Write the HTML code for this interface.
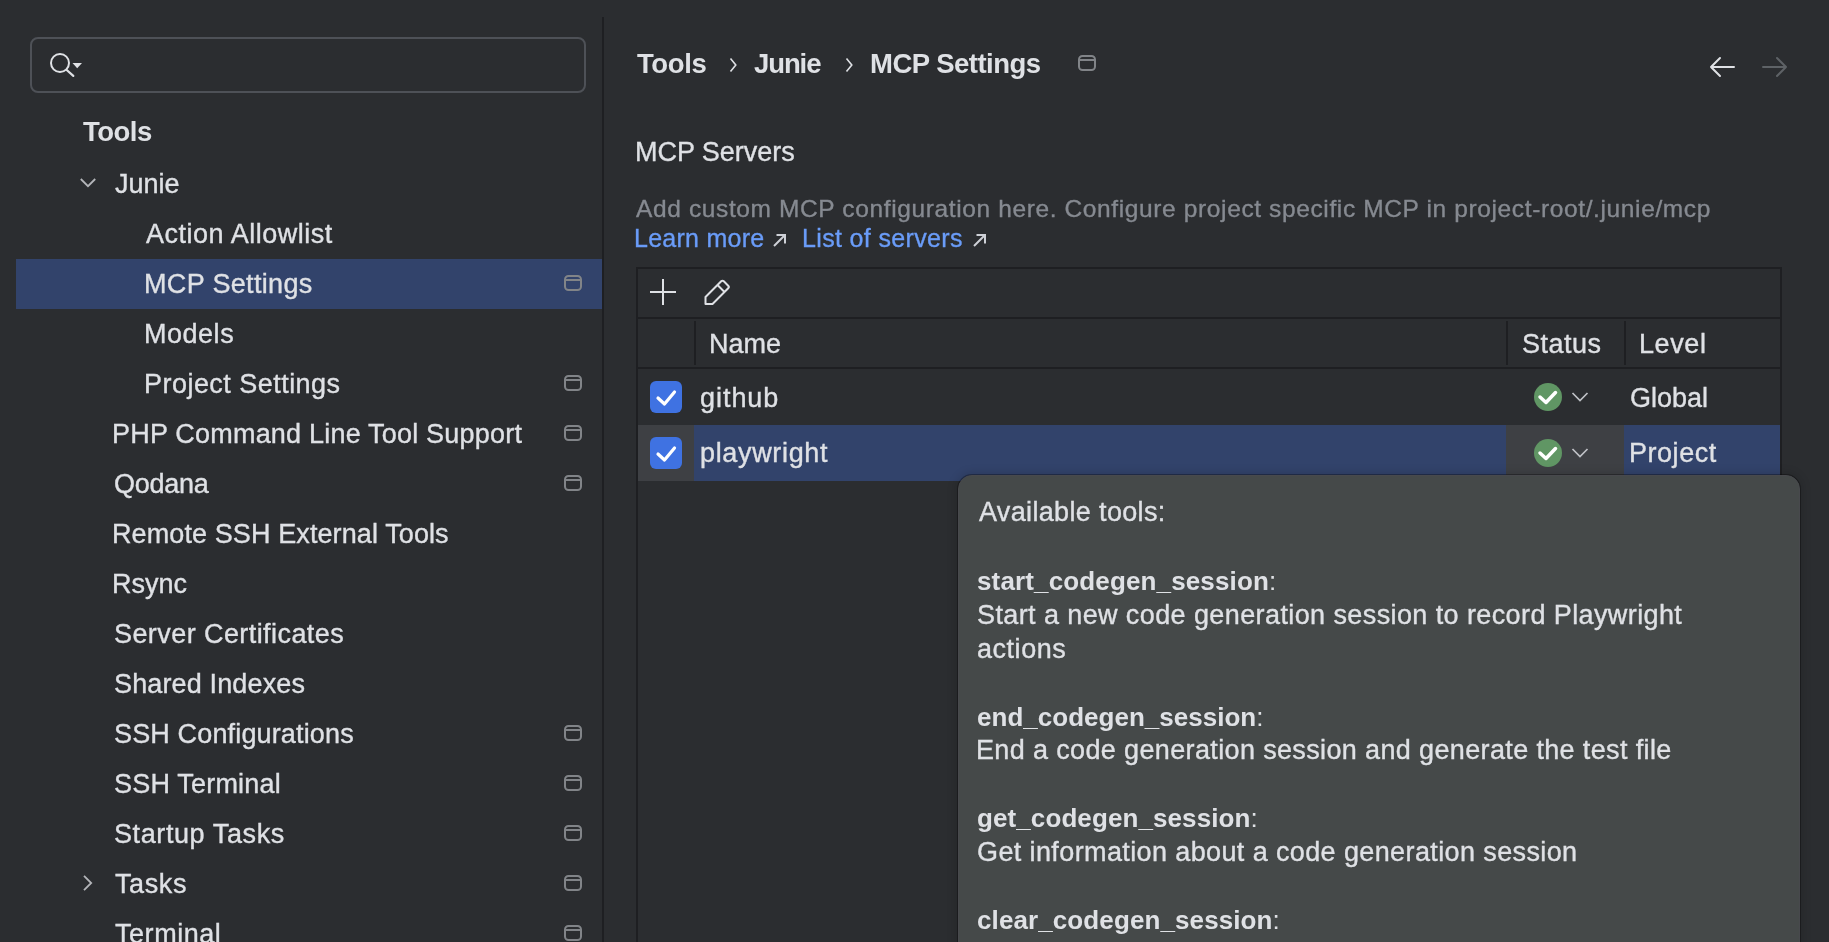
<!DOCTYPE html>
<html><head><meta charset="utf-8"><style>
html,body{margin:0;padding:0;}
body{width:1829px;height:942px;overflow:hidden;background:#2B2D30;position:relative;font-family:"Liberation Sans",sans-serif;}
.t{position:absolute;white-space:pre;-webkit-font-smoothing:antialiased;-webkit-text-stroke:0.35px currentColor;will-change:transform;}
.r{position:absolute;}
.s{position:absolute;overflow:visible;}
</style></head><body>
<div class="r" style="left:30px;top:37px;width:552px;height:52px;border:2px solid #4E5157;border-radius:8px;"></div>
<svg class="s" style="left:46px;top:48px" width="40" height="34" viewBox="0 0 40 34"><circle cx="14" cy="15" r="9" fill="none" stroke="#DFE1E5" stroke-width="2"/><line x1="20.7" y1="22" x2="27.3" y2="27.9" stroke="#DFE1E5" stroke-width="2.2" stroke-linecap="round"/><path d="M26.5 15 L36 15 L31.2 20.2 Z" fill="#DFE1E5"/></svg>
<div class="r" style="left:16px;top:259px;width:586px;height:50px;background:#32436B;"></div>
<div class="r" style="left:602px;top:17px;width:2px;height:925px;background:#1E1F22;"></div>
<div class="t" id="t1" style="left:82.80px;top:116.47px;font-size:27.5px;line-height:32px;font-weight:bold;color:#DFE1E5;letter-spacing:-0.500px;-webkit-text-stroke:0;">Tools</div>
<div class="t" id="t2" style="left:114.80px;top:169.14px;font-size:27px;line-height:31px;font-weight:normal;color:#DFE1E5;letter-spacing:0.000px;">Junie</div>
<svg class="s" style="left:78px;top:175px" width="20" height="14" viewBox="0 0 20 14"><path d="M2.8 4 L10 11.2 L17.2 4" fill="none" stroke="#B3B5B9" stroke-width="1.8"/></svg>
<div class="t" id="t3" style="left:146.00px;top:219.14px;font-size:27px;line-height:31px;font-weight:normal;color:#DFE1E5;letter-spacing:0.520px;">Action Allowlist</div>
<div class="t" id="t4" style="left:144.40px;top:269.14px;font-size:27px;line-height:31px;font-weight:normal;color:#DFE1E5;letter-spacing:0.342px;">MCP Settings</div>
<svg class="s" style="left:564px;top:275px" width="18" height="16" viewBox="0 0 18 16"><rect x="1" y="1" width="16" height="14" rx="3.5" fill="none" stroke="#818488" stroke-width="2"/><line x1="1" y1="5" x2="17" y2="5" stroke="#818488" stroke-width="2"/></svg>
<div class="t" id="t5" style="left:144.40px;top:319.14px;font-size:27px;line-height:31px;font-weight:normal;color:#DFE1E5;letter-spacing:0.520px;">Models</div>
<div class="t" id="t6" style="left:144.40px;top:369.14px;font-size:27px;line-height:31px;font-weight:normal;color:#DFE1E5;letter-spacing:0.466px;">Project Settings</div>
<svg class="s" style="left:564px;top:375px" width="18" height="16" viewBox="0 0 18 16"><rect x="1" y="1" width="16" height="14" rx="3.5" fill="none" stroke="#818488" stroke-width="2"/><line x1="1" y1="5" x2="17" y2="5" stroke="#818488" stroke-width="2"/></svg>
<div class="t" id="t7" style="left:112.40px;top:419.14px;font-size:27px;line-height:31px;font-weight:normal;color:#DFE1E5;letter-spacing:0.202px;">PHP Command Line Tool Support</div>
<svg class="s" style="left:564px;top:425px" width="18" height="16" viewBox="0 0 18 16"><rect x="1" y="1" width="16" height="14" rx="3.5" fill="none" stroke="#818488" stroke-width="2"/><line x1="1" y1="5" x2="17" y2="5" stroke="#818488" stroke-width="2"/></svg>
<div class="t" id="t8" style="left:114.00px;top:469.14px;font-size:27px;line-height:31px;font-weight:normal;color:#DFE1E5;letter-spacing:-0.280px;">Qodana</div>
<svg class="s" style="left:564px;top:475px" width="18" height="16" viewBox="0 0 18 16"><rect x="1" y="1" width="16" height="14" rx="3.5" fill="none" stroke="#818488" stroke-width="2"/><line x1="1" y1="5" x2="17" y2="5" stroke="#818488" stroke-width="2"/></svg>
<div class="t" id="t9" style="left:112.40px;top:519.14px;font-size:27px;line-height:31px;font-weight:normal;color:#DFE1E5;letter-spacing:0.102px;">Remote SSH External Tools</div>
<div class="t" id="t10" style="left:112.40px;top:569.14px;font-size:27px;line-height:31px;font-weight:normal;color:#DFE1E5;letter-spacing:0.000px;">Rsync</div>
<div class="t" id="t11" style="left:114.00px;top:619.14px;font-size:27px;line-height:31px;font-weight:normal;color:#DFE1E5;letter-spacing:0.424px;">Server Certificates</div>
<div class="t" id="t12" style="left:114.00px;top:669.14px;font-size:27px;line-height:31px;font-weight:normal;color:#DFE1E5;letter-spacing:0.140px;">Shared Indexes</div>
<div class="t" id="t13" style="left:114.00px;top:719.14px;font-size:27px;line-height:31px;font-weight:normal;color:#DFE1E5;letter-spacing:0.149px;">SSH Configurations</div>
<svg class="s" style="left:564px;top:725px" width="18" height="16" viewBox="0 0 18 16"><rect x="1" y="1" width="16" height="14" rx="3.5" fill="none" stroke="#818488" stroke-width="2"/><line x1="1" y1="5" x2="17" y2="5" stroke="#818488" stroke-width="2"/></svg>
<div class="t" id="t14" style="left:114.00px;top:769.14px;font-size:27px;line-height:31px;font-weight:normal;color:#DFE1E5;letter-spacing:0.196px;">SSH Terminal</div>
<svg class="s" style="left:564px;top:775px" width="18" height="16" viewBox="0 0 18 16"><rect x="1" y="1" width="16" height="14" rx="3.5" fill="none" stroke="#818488" stroke-width="2"/><line x1="1" y1="5" x2="17" y2="5" stroke="#818488" stroke-width="2"/></svg>
<div class="t" id="t15" style="left:114.00px;top:819.14px;font-size:27px;line-height:31px;font-weight:normal;color:#DFE1E5;letter-spacing:0.598px;">Startup Tasks</div>
<svg class="s" style="left:564px;top:825px" width="18" height="16" viewBox="0 0 18 16"><rect x="1" y="1" width="16" height="14" rx="3.5" fill="none" stroke="#818488" stroke-width="2"/><line x1="1" y1="5" x2="17" y2="5" stroke="#818488" stroke-width="2"/></svg>
<div class="t" id="t16" style="left:114.80px;top:869.14px;font-size:27px;line-height:31px;font-weight:normal;color:#DFE1E5;letter-spacing:0.600px;">Tasks</div>
<svg class="s" style="left:80px;top:873px" width="14" height="20" viewBox="0 0 14 20"><path d="M4 2.8 L11.2 10 L4 17.2" fill="none" stroke="#B3B5B9" stroke-width="1.8"/></svg>
<svg class="s" style="left:564px;top:875px" width="18" height="16" viewBox="0 0 18 16"><rect x="1" y="1" width="16" height="14" rx="3.5" fill="none" stroke="#818488" stroke-width="2"/><line x1="1" y1="5" x2="17" y2="5" stroke="#818488" stroke-width="2"/></svg>
<div class="t" id="t17" style="left:114.80px;top:919.14px;font-size:27px;line-height:31px;font-weight:normal;color:#DFE1E5;letter-spacing:0.543px;">Terminal</div>
<svg class="s" style="left:564px;top:925px" width="18" height="16" viewBox="0 0 18 16"><rect x="1" y="1" width="16" height="14" rx="3.5" fill="none" stroke="#818488" stroke-width="2"/><line x1="1" y1="5" x2="17" y2="5" stroke="#818488" stroke-width="2"/></svg>
<div class="t" id="t18" style="left:636.80px;top:48.47px;font-size:27.5px;line-height:32px;font-weight:bold;color:#DFE1E5;letter-spacing:-0.400px;-webkit-text-stroke:0;">Tools</div>
<svg class="s" style="left:727px;top:56px" width="12" height="18" viewBox="0 0 12 18"><path d="M3.5 2.5 L8.8 9 L3.5 15.5" fill="none" stroke="#DFE1E5" stroke-width="1.6"/></svg>
<div class="t" id="t19" style="left:753.80px;top:48.47px;font-size:27.5px;line-height:32px;font-weight:bold;color:#DFE1E5;letter-spacing:-1.100px;-webkit-text-stroke:0;">Junie</div>
<svg class="s" style="left:843px;top:56px" width="12" height="18" viewBox="0 0 12 18"><path d="M3.5 2.5 L8.8 9 L3.5 15.5" fill="none" stroke="#DFE1E5" stroke-width="1.6"/></svg>
<div class="t" id="t20" style="left:869.80px;top:48.47px;font-size:27.5px;line-height:32px;font-weight:bold;color:#DFE1E5;letter-spacing:-0.518px;-webkit-text-stroke:0;">MCP Settings</div>
<svg class="s" style="left:1078px;top:55px" width="18" height="16" viewBox="0 0 18 16"><rect x="1" y="1" width="16" height="14" rx="3.5" fill="none" stroke="#818488" stroke-width="2"/><line x1="1" y1="5" x2="17" y2="5" stroke="#818488" stroke-width="2"/></svg>
<svg class="s" style="left:1708px;top:56px" width="30" height="22" viewBox="0 0 30 22"><path d="M3 11 L26 11 M12 2 L3 11 L12 20" fill="none" stroke="#DFE1E5" stroke-width="2" stroke-linecap="round" stroke-linejoin="round"/></svg>
<svg class="s" style="left:1760px;top:56px" width="30" height="22" viewBox="0 0 30 22"><path d="M3 11 L26 11 M17 2 L26 11 L17 20" fill="none" stroke="#5E6266" stroke-width="2" stroke-linecap="round" stroke-linejoin="round"/></svg>
<div class="t" id="t21" style="left:635.20px;top:137.14px;font-size:27px;line-height:31px;font-weight:normal;color:#DFE1E5;letter-spacing:-0.040px;">MCP Servers</div>
<div class="t" id="t22" style="left:636.32px;top:194.51px;font-size:24.5px;line-height:28px;font-weight:normal;color:#868A91;letter-spacing:0.623px;">Add custom MCP configuration here. Configure project specific MCP in project-root/.junie/mcp</div>
<div class="t" id="t23" style="left:634.40px;top:223.84px;font-size:25px;line-height:29px;font-weight:normal;color:#6A9CF8;letter-spacing:0.269px;">Learn more</div>
<svg class="s" style="left:772px;top:233px" width="15" height="15" viewBox="0 0 15 15"><path d="M2 13 L13 2 M4.5 2 L13 2 L13 10.5" fill="none" stroke="#CED0D6" stroke-width="2"/></svg>
<div class="t" id="t24" style="left:802.20px;top:223.84px;font-size:25px;line-height:29px;font-weight:normal;color:#6A9CF8;letter-spacing:0.343px;">List of servers</div>
<svg class="s" style="left:972px;top:233px" width="15" height="15" viewBox="0 0 15 15"><path d="M2 13 L13 2 M4.5 2 L13 2 L13 10.5" fill="none" stroke="#CED0D6" stroke-width="2"/></svg>
<div class="r" style="left:636px;top:267px;width:1142px;height:700px;border:2px solid #1E1F22;"></div>
<div class="r" style="left:638px;top:317px;width:1142px;height:2px;background:#1E1F22;"></div>
<div class="r" style="left:638px;top:367px;width:1142px;height:2px;background:#1E1F22;"></div>
<svg class="s" style="left:648px;top:277px" width="30" height="30" viewBox="0 0 30 30"><path d="M15 2 L15 28 M2 15 L28 15" stroke="#DFE1E5" stroke-width="2"/></svg>
<svg class="s" style="left:704px;top:279px" width="27" height="27" viewBox="0 0 27 27"><path d="M1.5 18 L17.2 2.3 Q18.5 1 19.8 2.3 L24.2 6.7 Q25.5 8 24.2 9.3 L8.5 25 L1.5 25 Z M13.5 6 L20.5 13" fill="none" stroke="#DFE1E5" stroke-width="2" stroke-linejoin="round"/></svg>
<div class="r" style="left:694px;top:321px;width:2px;height:44px;background:#1E1F22;"></div>
<div class="r" style="left:1506px;top:321px;width:2px;height:44px;background:#1E1F22;"></div>
<div class="r" style="left:1624px;top:321px;width:2px;height:44px;background:#1E1F22;"></div>
<div class="t" id="t25" style="left:709.40px;top:329.14px;font-size:27px;line-height:31px;font-weight:normal;color:#DFE1E5;letter-spacing:0.002px;">Name</div>
<div class="t" id="t26" style="left:1522.00px;top:329.14px;font-size:27px;line-height:31px;font-weight:normal;color:#DFE1E5;letter-spacing:0.480px;">Status</div>
<div class="t" id="t27" style="left:1639.40px;top:329.14px;font-size:27px;line-height:31px;font-weight:normal;color:#DFE1E5;letter-spacing:0.600px;">Level</div>
<div class="r" style="left:638px;top:425px;width:56px;height:56px;background:#3E4044;"></div>
<div class="r" style="left:694px;top:425px;width:812px;height:56px;background:#32436B;"></div>
<div class="r" style="left:1506px;top:425px;width:118px;height:56px;background:#3E4044;"></div>
<div class="r" style="left:1624px;top:425px;width:156px;height:56px;background:#32436B;"></div>
<svg class="s" style="left:650px;top:381px" width="32" height="32" viewBox="0 0 32 32"><rect x="0" y="0" width="32" height="32" rx="6" fill="#3F72E2"/><path d="M8 17 L14.5 23 L24.5 11" fill="none" stroke="#FFFFFF" stroke-width="3.2" stroke-linecap="round" stroke-linejoin="round"/></svg>
<svg class="s" style="left:650px;top:437px" width="32" height="32" viewBox="0 0 32 32"><rect x="0" y="0" width="32" height="32" rx="6" fill="#3F72E2"/><path d="M8 17 L14.5 23 L24.5 11" fill="none" stroke="#FFFFFF" stroke-width="3.2" stroke-linecap="round" stroke-linejoin="round"/></svg>
<div class="t" id="t28" style="left:700.00px;top:382.64px;font-size:27px;line-height:31px;font-weight:normal;color:#DFE1E5;letter-spacing:0.960px;">github</div>
<div class="t" id="t29" style="left:699.82px;top:438.14px;font-size:27px;line-height:31px;font-weight:normal;color:#DFE1E5;letter-spacing:0.663px;">playwright</div>
<svg class="s" style="left:1534px;top:383px" width="28" height="28" viewBox="0 0 28 28"><circle cx="14" cy="14" r="14" fill="#609664"/><path d="M6 14 L12 19.5 L21.5 9.5" fill="none" stroke="#FFFFFF" stroke-width="3.5" stroke-linecap="round" stroke-linejoin="round"/></svg>
<svg class="s" style="left:1570px;top:391px" width="20" height="12" viewBox="0 0 20 12"><path d="M2.5 2 L10 9.5 L17.5 2" fill="none" stroke="#BFC1C6" stroke-width="1.7"/></svg>
<svg class="s" style="left:1534px;top:439px" width="28" height="28" viewBox="0 0 28 28"><circle cx="14" cy="14" r="14" fill="#609664"/><path d="M6 14 L12 19.5 L21.5 9.5" fill="none" stroke="#FFFFFF" stroke-width="3.5" stroke-linecap="round" stroke-linejoin="round"/></svg>
<svg class="s" style="left:1570px;top:447px" width="20" height="12" viewBox="0 0 20 12"><path d="M2.5 2 L10 9.5 L17.5 2" fill="none" stroke="#BFC1C6" stroke-width="1.7"/></svg>
<div class="t" id="t30" style="left:1630.00px;top:382.64px;font-size:27px;line-height:31px;font-weight:normal;color:#DFE1E5;letter-spacing:0.000px;">Global</div>
<div class="t" id="t31" style="left:1628.68px;top:438.14px;font-size:27px;line-height:31px;font-weight:normal;color:#DFE1E5;letter-spacing:0.528px;">Project</div>
<div class="r" style="left:958px;top:475px;width:840px;height:520px;background:#454949;border:1px solid #48494D;border-radius:14px;box-shadow:0 0 0 1px rgba(0,0,0,0.3), 0 0 10px 2px rgba(0,0,0,0.15);"></div>
<div class="t" id="t32" style="left:978.80px;top:497.14px;font-size:27px;line-height:31px;font-weight:normal;color:#DFE1E5;letter-spacing:0.345px;">Available tools:</div>
<div class="t" id="t33" style="left:977.20px;top:565.99px;font-size:26px;line-height:30px;font-weight:normal;color:#DFE1E5;letter-spacing:0.142px;-webkit-text-stroke:0;"><b>start_codegen_session</b>:</div>
<div class="t" id="t34" style="left:977.20px;top:599.64px;font-size:27px;line-height:31px;font-weight:normal;color:#DFE1E5;letter-spacing:0.400px;">Start a new code generation session to record Playwright</div>
<div class="t" id="t35" style="left:977.20px;top:633.64px;font-size:27px;line-height:31px;font-weight:normal;color:#DFE1E5;letter-spacing:0.532px;">actions</div>
<div class="t" id="t36" style="left:977.20px;top:701.99px;font-size:26px;line-height:30px;font-weight:normal;color:#DFE1E5;letter-spacing:0.018px;-webkit-text-stroke:0;"><b>end_codegen_session</b>:</div>
<div class="t" id="t37" style="left:976.40px;top:735.14px;font-size:27px;line-height:31px;font-weight:normal;color:#DFE1E5;letter-spacing:0.360px;">End a code generation session and generate the test file</div>
<div class="t" id="t38" style="left:977.20px;top:802.99px;font-size:26px;line-height:30px;font-weight:normal;color:#DFE1E5;letter-spacing:0.098px;-webkit-text-stroke:0;"><b>get_codegen_session</b>:</div>
<div class="t" id="t39" style="left:977.20px;top:836.64px;font-size:27px;line-height:31px;font-weight:normal;color:#DFE1E5;letter-spacing:0.386px;">Get information about a code generation session</div>
<div class="t" id="t40" style="left:977.20px;top:904.99px;font-size:26px;line-height:30px;font-weight:normal;color:#DFE1E5;letter-spacing:0.104px;-webkit-text-stroke:0;"><b>clear_codegen_session</b>:</div>
</body></html>
